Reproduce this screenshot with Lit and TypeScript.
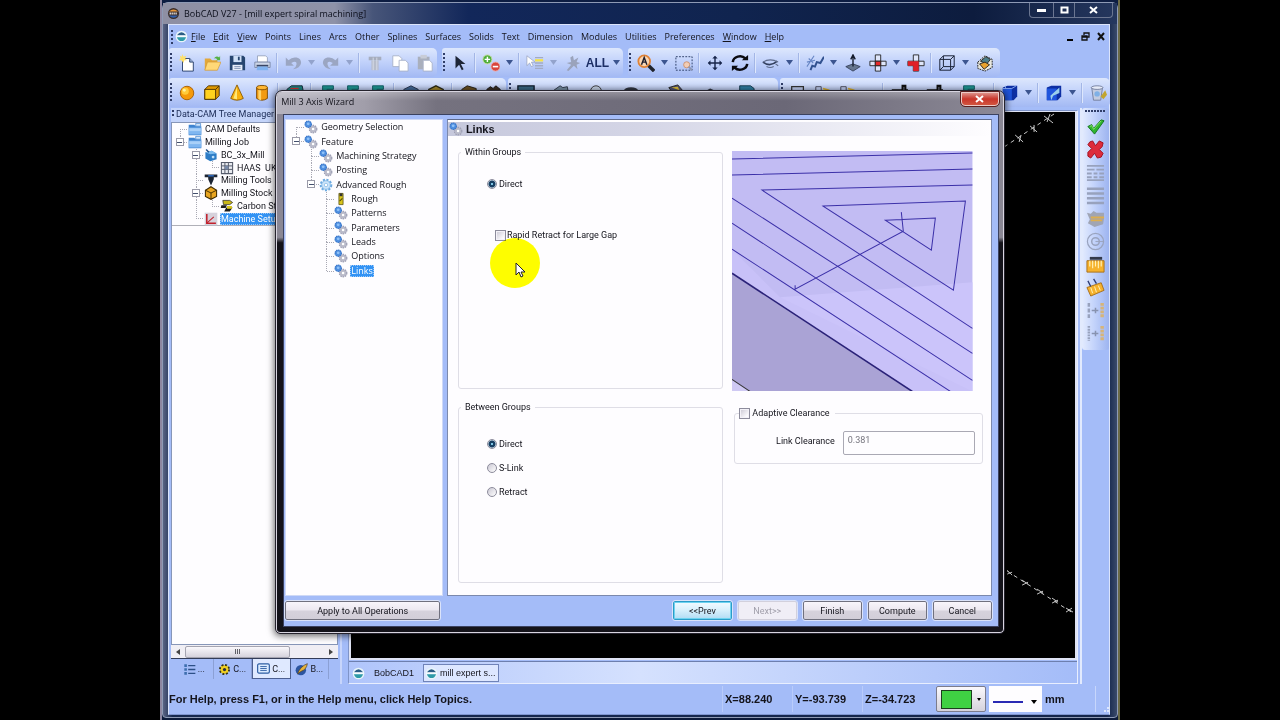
import { LitElement, html, svg, css, nothing } from "lit";
import { customElement } from "lit/decorators.js";
import { classMap } from "lit/directives/class-map.js";

/* Icon artwork, drawn on a 20 x 20 grid. */
const gear = (x: number, y: number, r: number, c: string, d: string) => svg`
  <circle cx=${x} cy=${y} r=${r} fill=${c} stroke=${d} stroke-width="2" stroke-dasharray="2 1.3"/>
  <circle cx=${x} cy=${y} r=${r - 0.6} fill=${c}/>
  <circle cx=${x} cy=${y} r=${r * 0.35} fill="#fff"/>`;

const art: Record<string, unknown> = {
  doc: svg`<path d="M5 5h8l4 4v10H5z" fill="#fff" stroke="#223a66"/><path d="M13 5v4h4" fill="#9db4da" stroke="#223a66"/><path d="M5 0l1 3 3-1-1 3 2 2-3 0-1 3-2-3-3 0 2-2-1-3 2 1z" fill="#ffe067"/>`,
  open: svg`<path d="M2 5h6l2 2h6v11H2z" fill="#e3a83a"/><path d="M5 9h15l-4 9H2z" fill="#ffd877" stroke="#c98e2b" stroke-width=".6"/><path d="M12 5q3-4 6-1l1-2v5h-5l2-1q-2-2-4-1z" fill="#54b043"/>`,
  save: svg`<path d="M2 2h15l2 2v14H2z" fill="#26456f"/><path d="M6 2h9v7H6z" fill="#cfe0f7"/><path d="M11 3h2v4h-2z" fill="#26456f"/><path d="M5 12h11v6H5z" fill="#e6edf9"/><path d="M7 14h7M7 16h7" stroke="#7a8db0"/>`,
  print: svg`<path d="M5 2h9l2 2v5H5z" fill="#fff" stroke="#8592ad" stroke-width=".8"/><path d="M2 9h17v6H2z" fill="#cdd6e8" stroke="#6a7896" stroke-width=".8"/><path d="M4 12h13v2H4z" fill="#3a4664"/><path d="M5 14h11l1 4H4z" fill="#7fb2f0"/>`,
  undo: svg`<path d="M2 4v9h9l-3-3q6-3 6 1 0 3-4 6 8-1 9-7 0-5-5-6-5-1-9 3z" fill="#9ba6c2"/>`,
  redo: svg`<path d="M18 4v9H9l3-3q-6-3-6 1 0 3 4 6-8-1-9-7 0-5 5-6 5-1 9 3z" fill="#9ba6c2"/>`,
  cut: svg`<path d="M3 3h14v4H3z" fill="#a6adbe"/><path d="M6 7h8v11H6z" fill="#b7bdcb"/><path d="M8 4v14M12 4v14" stroke="#d9deea"/>`,
  copy: svg`<path d="M2 2h7l3 3v9H2z" fill="#fff" stroke="#a9b2c8"/><path d="M9 7h7l3 3v9H9z" fill="#fff" stroke="#a9b2c8"/>`,
  paste: svg`<path d="M2 3h13v14H2z" fill="#a9afbc"/><path d="M5 1h7v4H5z" fill="#c8ccd6"/><path d="M8 7h7l3 3v9H8z" fill="#fff" stroke="#a9b2c8"/>`,
  pointer: svg`<path d="M5 2v14l4-4 3 6 2-1-3-6h5z" fill="#1d2536"/>`,
  plusminus: svg`<circle cx="6" cy="6" r="5" fill="#4fae3b" stroke="#c9dca0"/><path d="M6 3v6M3 6h6" stroke="#fff" stroke-width="1.6"/><circle cx="15" cy="14" r="5" fill="#d8443e" stroke="#f0a8a0"/><path d="M12 14h6" stroke="#fff" stroke-width="1.8"/>`,
  pick: svg`<path d="M1 2v11l3-3 2 4 2-1-2-4h4z" fill="#fff" stroke="#8d97b3" stroke-width=".7"/><path d="M10 4h9M10 10h9M10 13h9M10 16h9" stroke="#a2abc4" stroke-width="1.5"/><path d="M10 7h9" stroke="#f3e24a" stroke-width="2.600"/>`,
  wand: svg`<path d="M10 2l1 5 5-3-2 5 4 1-4 2 1 5-4-4-6 6-2-1 5-6-5-2 5-1-1-5z" fill="#9aa3bb"/>`,
  all: nothing,
  zoom: svg`<circle cx="8" cy="8" r="6.500" fill="#f8d6b4" stroke="#e08236" stroke-width="2"/><path d="M5 12l3-8 3 8M6 9h4" fill="none" stroke="#1d1d2c" stroke-width="1.6"/><path d="M13 13l6 6" stroke="#20242e" stroke-width="3.8"/>`,
  zoomwin: svg`<path d="M1 3h18v15H1z" fill="none" stroke="#22355f" stroke-dasharray="2 1.5"/><circle cx="13" cy="12" r="3.4" fill="#f2cdb5" stroke="#c98e6c"/><path d="M15 14l4 4" stroke="#8b95b0" stroke-width="2"/>`,
  move: svg`<path d="M10 3v14M3 10h14" fill="none" stroke="#17254a" stroke-width="1.6"/><path d="M10 2l3 3H7zM10 18l3-3H7zM2 10l3-3v6zM18 10l-3-3v6z" fill="#17254a"/>`,
  rotate: svg`<path d="M2 9a8 7 0 0 1 14-4M18 11a8 7 0 0 1-14 4" fill="none" stroke="#0b0b10" stroke-width="2.800"/><path d="M12 7h7V1zM8 13H1v6z" fill="#0b0b10"/>`,
  eye: svg`<path d="M1 9q8 6 16-1" fill="none" stroke="#33405f" stroke-width="1.800"/><path d="M1 9q8-5 17 0M5 14q4 2 8 0M15 11l3 2" fill="none" stroke="#5f6c8c" stroke-width="1.200"/>`,
  curve: svg`<path d="M5 18l2-5 3 1 2-5 4 1 4-7" fill="none" stroke="#31518f" stroke-width="2.200"/><path d="M1 9l9-2M1 14L9 2M3 5l5 5" stroke="#6685c4" stroke-width="1.200"/>`,
  plane: svg`<path d="M2 14l8-3 8 3-8 5z" fill="#66768f" stroke="#34405a"/><path d="M10 14V2M7.500 6L10 1l2.500 5" stroke="#141b2c" stroke-width="1.500" fill="none"/>`,
  cross: svg`<path d="M7 1h6v18H7zM1 8h18v5H1z" fill="#dfe6fa" stroke="#222" stroke-width="1"/><path d="M7 8h6v5H7z" fill="#e52a2a" stroke="#222"/>`,
  cross2: svg`<path d="M7 1h6v18H7zM1 8h18v5H1z" fill="#dfe6fa" stroke="#222" stroke-width="1"/><path d="M1 8h12v11H7v-6H1z" fill="#e01f28"/>`,
  wire: svg`<path d="M2 6h12v12H2zM6 2h12v12H6zM2 6l4-4M14 6l4-4M2 18l4-4M14 18l4-4" fill="none" stroke="#1b2338" stroke-width="1.1"/>`,
  iso: svg`<path d="M2 9l8-7 8 4v9l-8 4-8-3z" fill="#e8e8e0" stroke="#141414" stroke-dasharray="2 1"/><path d="M5 8l6-5 5 3-4 5z" fill="#4d7f8a" stroke="#222"/><path d="M4 11l6-2 5 3-6 5z" fill="#e8a22e" stroke="#222"/>`,
  sphere: svg`<circle cx="10" cy="10" r="7.500" fill="#f59a0a" stroke="#a45b00"/><circle cx="8" cy="8" r="4" fill="#ffcb3a"/><circle cx="7" cy="7" r="1.600" fill="#fff0a0"/>`,
  cube: svg`<path d="M2 6l4-4h12v11l-4 4H2z" fill="#e09a00" stroke="#4a3000"/><path d="M2 6h12v11H2z" fill="#ffd21e" stroke="#4a3000"/><path d="M14 6l4-4" stroke="#4a3000"/>`,
  cone: svg`<path d="M10 1l7 15q-7 4-14 0z" fill="#f8b010" stroke="#8a5a00"/><path d="M10 3L6 16l4 1z" fill="#ffe778"/>`,
  cylinder: svg`<path d="M4 4v12q6 4 12 0V4z" fill="#f29b13" stroke="#7c4a00"/><path d="M6 5v12l3 1V6z" fill="#ffd468"/><ellipse cx="10" cy="4" rx="6" ry="2.400" fill="#ffb733" stroke="#7c4a00"/>`,
  tealcube: svg`<path d="M1 6l5-4 12 0 1 5v8H1z" fill="#1f8a86" stroke="#123"/><path d="M5 5h9" stroke="#d33" stroke-width="1.400"/>`,
  teal: svg`<path d="M4 2h12v4H9v10H4z" fill="#1f9a96" stroke="#0d5a62"/>`,
  hexblue: svg`<path d="M10 2l8 4v8l-8 4-8-4V6z" fill="#456c9c" stroke="#23304a"/>`,
  hexgold: svg`<path d="M10 2l8 4v8l-8 4-8-4V6z" fill="#a58a2c" stroke="#2a2a18" stroke-width="1.500"/>`,
  dark: svg`<path d="M2 6l6-4 10 3v9H2z" fill="#6d5424" stroke="#1d1a14"/>`,
  gears: svg`<path d="M2 6l4-3 3 2 3-3 5 4-2 7H3z" fill="#3b3026" stroke="#111"/>`,
  screen: svg`<path d="M1 2h18v14H1z" fill="#3b6a86" stroke="#101c2c" stroke-width="1.500"/>`,
  diamond: svg`<path d="M2 7l7-5 3 2 5-1 1 6-9 6z" fill="#7a92a8" stroke="#2a3444"/>`,
  ring: svg`<circle cx="10" cy="8" r="6" fill="#c9d6ea" stroke="#333"/>`,
  oval: svg`<ellipse cx="10" cy="8" rx="8" ry="4.500" fill="#333845"/>`,
  tilt: svg`<path d="M2 4l10-3 6 7-10 4z" fill="#557" stroke="#222"/><path d="M5 4l7-1 2 4z" fill="#e6c63a"/>`,
  wedge: svg`<path d="M2 9l7-4 9 4-6 4z" fill="#343a48"/>`,
  box: svg`<path d="M3 2h12l4 3v8H3z" fill="#2f7fa4" stroke="#12344a"/>`,
  frame: svg`<path d="M3 3h13v12H3z" fill="none" stroke="#333" stroke-width="1.400"/>`,
  frame2: svg`<path d="M2 3h6v12H2z" fill="none" stroke="#445"/><path d="M10 5l7 2" stroke="#e2b52d" stroke-width="2"/>`,
  bar: svg`<path d="M2 7h12V2h3v5h3" stroke="#111" stroke-width="2.400" fill="none"/>`,
  bluebox: svg`<path d="M2 4l5-2h11v12l-4 4H2z" fill="#0d2fa3"/><path d="M2 5h10v13H2z" fill="#1f55dd"/><path d="M5 2v3M2 5h10l5-3" stroke="#89aaf4" fill="none"/>`,
  bluebox2: svg`<path d="M2 4l5-2h11v12l-4 4H2z" fill="#0d2fa3"/><path d="M2 5h11v13H2z" fill="#1f55dd"/><path d="M6 13l10-9v6l-7 3-2 5z" fill="#9ad0ec"/>`,
  bin: svg`<path d="M3 4h12l-2 14H5z" fill="#c3cbe0" stroke="#717c9c"/><ellipse cx="9" cy="4" rx="6.500" ry="2" fill="#e6ebf8" stroke="#717c9c"/><circle cx="9" cy="11" r="3" fill="#7fb0e6"/><path d="M13 14l5-7 2 5-4 5z" fill="#c2a52d"/>`,
  check: svg`<path d="M2 10l4-2 2 4 8-9 3 1-10 14z" fill="#2fb52f" stroke="#12751c"/><path d="M4 10l2-1 2 4 8-9" fill="none" stroke="#8be06c"/>`,
  redx: svg`<path d="M4 2l3-1 3 5 4-5 4 2-1 4-3 3 4 4-2 4-4 1-3-5-4 5-3-2 0-4 4-4-4-4z" fill="#dd2c3c" stroke="#a0101f"/>`,
  rows1: svg`<path d="M1 3h18M1 7h8M11 7h8M1 11h5M8 11h4M14 11h5M1 15h5M8 15h4M14 15h5M1 18h18" stroke="#98a2bd" stroke-width="2"/>`,
  rows2: svg`<path d="M1 3h18M1 8h18M1 13h18M1 18h18" stroke="#98a2bd" stroke-width="2.600"/>`,
  stack: svg`<path d="M1 4l4 1 3-3 3 2h8v6l-1 6-9 3-7-4 2-4z" fill="#a0a5b4"/><path d="M5 9h14M5 12h12" stroke="#dcae50" stroke-width="2"/>`,
  target: svg`<circle cx="10" cy="10" r="8.500" fill="none" stroke="#9aa4bf" stroke-width="1.300"/><circle cx="10" cy="10" r="4" fill="none" stroke="#9aa4bf" stroke-width="1.600"/><path d="M10 10h8" stroke="#9aa4bf"/>`,
  ruler: svg`<path d="M4 2h13v3H4z" fill="#333a4c"/><path d="M1 6h18v12H1z" fill="#f6b22c" stroke="#a8701a"/><path d="M4 6v6M7 6v8M10 6v6M13 6v8M16 6v6" stroke="#fff1b8" stroke-width="1.200"/>`,
  ruler2: svg`<path d="M1 10l15-5 3 8-14 6z" fill="#f6b22c" stroke="#a8701a"/><path d="M5 10l2 6M9 9l2 6M13 8l2 5" stroke="#fff1b8"/><path d="M2 3l3 6M8 1l3 5" stroke="#2c3c74" stroke-width="1.400"/>`,
  align1: svg`<path d="M3 2v4M3 8v4M3 14v4" stroke="#98a2bd" stroke-width="2.600"/><path d="M6 10h7M10 7v6" stroke="#8893b0" stroke-width="1.600"/><path d="M17 2v16" stroke="#d6b479" stroke-width="3.600" stroke-dasharray="3 1"/>`,
  align2: svg`<path d="M3 2v16" stroke="#98a2bd" stroke-width="2.600" stroke-dasharray="2 1"/><path d="M6 10h7M10 7v6" stroke="#8893b0" stroke-width="1.600"/><path d="M17 2v16" stroke="#d6b479" stroke-width="3.600" stroke-dasharray="3 1"/>`,
  folder: svg`<path d="M1 4h8l2 2h8v13H1z" fill="#3d83d0"/><path d="M1 8h18v10H1z" fill="#7fb6f0"/><path d="M2 9h16v4H2z" fill="#a9d0f8"/><path d="M11 2h7v4h-7z" fill="#cfe4fa" stroke="#3d83d0"/>`,
  mill: svg`<path d="M2 6l9-2 7 4v8l-9 3-7-4z" fill="#2d7cc6"/><path d="M2 6l7 3 9-1-7-4z" fill="#7cbbee"/><path d="M3 2l4 4" stroke="#1c4d85" stroke-width="2"/><circle cx="13" cy="13" r="2" fill="#bfe0fa"/>`,
  grid: svg`<path d="M2 2h16v16H2z" fill="#e8eaf0" stroke="#555b6b" stroke-width="1.500"/><path d="M7 2v16M2 7h16M2 12h16M12 2v16" stroke="#555b6b" stroke-width="1.400"/><path d="M7 7h5v5H7z" fill="#7688a8"/>`,
  tool: svg`<path d="M1 2h18v4h-5v3l-4 9-4-9V6H1z" fill="#1d2533"/><path d="M6 4h8" stroke="#2f6fc9" stroke-width="2"/>`,
  stock: svg`<path d="M10 1l8 5v9l-8 4-8-4V6z" fill="#e8a520" stroke="#3d2900" stroke-width="1.500"/><path d="M2 6l8 4 8-4M10 10v9" fill="none" stroke="#3d2900" stroke-width="1.300"/>`,
  carbon: svg`<path d="M4 2h10l4 3-4 3H5z" fill="#c9b818" stroke="#222"/><path d="M2 9h8l-2 4H1zM9 12h9l-4 6H6z" fill="#1c1c1c"/><path d="M10 10h7v4h-7z" fill="#d8c51e"/>`,
  setup: svg`<path d="M1 1h18v18H1z" fill="#d6d2dc"/><path d="M4 3v13h13" stroke="#c2202c" stroke-width="2.200" fill="none"/><path d="M4 16l10-9" stroke="#c2202c" stroke-width="1.500"/>`,
  cog2: svg`${gear(13, 13, 5.2, "#b9bac9", "#9c9db3")}<circle cx="6" cy="6" r="4.600" fill="#4f8fe0" stroke="#3472c6" stroke-width="1.500" stroke-dasharray="2 1"/><circle cx="6" cy="5.500" r="2" fill="#8fc1f7"/>`,
  cogblue: svg`<circle cx="10" cy="10" r="7.500" fill="#d3e9fb" stroke="#6fabe0" stroke-width="3" stroke-dasharray="3 2"/><circle cx="10" cy="10" r="6" fill="#cfe6fa" stroke="#7db4e4"/><circle cx="10" cy="10" r="2.500" fill="#fff" stroke="#7db4e4"/>`,
  rough: svg`<path d="M7 2h6v16H7z" fill="#d8c41c" stroke="#4f4808"/><path d="M8 2h4v4H8z" fill="#333"/><path d="M8 13l4-4" stroke="#4f4808" stroke-width="1.500"/>`,
  globe: svg`<circle cx="10" cy="10" r="9" fill="#e8f4fa"/><path d="M3 8q7-9 14 0z" fill="#2a5d86"/><path d="M3 11h14q-2 6-7 6t-7-6z" fill="#2e9aa8"/><path d="M2 9.500h16" stroke="#fff" stroke-width="1.500"/>`,
  app: svg`<circle cx="10" cy="10" r="8.500" fill="#3a2d2a"/><path d="M3 7q7-6 14 0z" fill="#e8973a"/><path d="M3 13h14q-7 7-14 0z" fill="#2f5fae"/><path d="M4 10h12" stroke="#e9e2dc" stroke-width="3" stroke-dasharray="2 1"/>`,
  list: svg`<path d="M2 2h4v4H2zM2 8h4v4H2zM2 14h4v4H2z" fill="#3f6fae"/><path d="M8 4h11M8 10h11M8 16h11" stroke="#2c4f86" stroke-width="2.200"/>`,
  cogtab: svg`<circle cx="10" cy="10" r="7" fill="#f0cf1f" stroke="#37351a" stroke-width="3" stroke-dasharray="3 2.500"/><circle cx="10" cy="10" r="5.500" fill="#f0cf1f"/><circle cx="10" cy="10" r="2.500" fill="#2b2f3c"/>`,
  cam: svg`<rect x="1" y="3" width="18" height="14" rx="2" fill="#dcecff" stroke="#2e5ea3" stroke-width="1.800"/><path d="M5 7h10M5 10h10M5 13h10" stroke="#2e5ea3" stroke-width="1.400"/>`,
  feather: svg`<circle cx="9" cy="11" r="8" fill="#2c55a0"/><path d="M4 17Q8 5 19 1q-1 9-10 12z" fill="#e7b33a" stroke="#4a3a20"/>`,
};

const icon = (name: string, size = 18) => html`<svg class="icon" width=${size} height=${size} viewBox="0 0 20 20" aria-hidden="true">${art[name]}</svg>`;

const strokes: Record<string, string[]> = {
  G: ["down", "right"], T: ["up", "down", "right"], L: ["up", "right"], I: ["up", "down"],
  B: ["up", "down", "right", "box"], b: ["up", "right", "box"], " ": [],
};

const guide = (kind: string) => {
  const s = strokes[kind];
  const d = "1 1";
  return html`<svg class="guide" aria-hidden="true">
    ${s.includes("up") ? svg`<line x1="50%" y1="0" x2="50%" y2="50%" stroke="#a9a9b4" stroke-dasharray=${d}/>` : nothing}
    ${s.includes("down") ? svg`<line x1="50%" y1="50%" x2="50%" y2="100%" stroke="#a9a9b4" stroke-dasharray=${d}/>` : nothing}
    ${s.includes("right") ? svg`<line x1="50%" y1="50%" x2="100%" y2="50%" stroke="#a9a9b4" stroke-dasharray=${d}/>` : nothing}
    ${s.includes("box") ? svg`<svg x="50%" y="50%" overflow="visible"><rect x="-4" y="-4" width="7" height="7" fill="#fff" stroke="#9a9aa8"/><path d="M-3 0h5" stroke="#44506e"/></svg>` : nothing}
  </svg>`;
};

type Row = { g: string; icon: string; text: string; on?: boolean };

const tree = (rows: Row[], label: string, cls: string) => html`
  <div class="tree ${cls}" role="tree" aria-label=${label}>
    ${rows.map((r) => html`<div class="node" role="treeitem" aria-selected=${r.on ? "true" : "false"}>
      ${[...r.g].map(guide)}<span class="nodeicon">${icon(r.icon, 14)}</span>
      <span class=${classMap({ nodetext: true, on: !!r.on })}>${r.text}</span></div>`)}
  </div>`;

const camRows: Row[] = [
  { g: "G", icon: "folder", text: "CAM Defaults" },
  { g: "b", icon: "folder", text: "Milling Job" },
  { g: " B", icon: "mill", text: "BC_3x_Mill" },
  { g: " IL", icon: "grid", text: "HAAS  UK" },
  { g: " T", icon: "tool", text: "Milling Tools" },
  { g: " B", icon: "stock", text: "Milling Stock" },
  { g: " IL", icon: "carbon", text: "Carbon Steel" },
  { g: " L", icon: "setup", text: "Machine Setup", on: true },
];

const wizardRows: Row[] = [
  { g: "G", icon: "cog2", text: "Geometry Selection" },
  { g: "b", icon: "cog2", text: "Feature" },
  { g: " T", icon: "cog2", text: "Machining Strategy" },
  { g: " T", icon: "cog2", text: "Posting" },
  { g: " b", icon: "cogblue", text: "Advanced Rough" },
  { g: "  T", icon: "rough", text: "Rough" },
  { g: "  T", icon: "cog2", text: "Patterns" },
  { g: "  T", icon: "cog2", text: "Parameters" },
  { g: "  T", icon: "cog2", text: "Leads" },
  { g: "  T", icon: "cog2", text: "Options" },
  { g: "  L", icon: "cog2", text: "Links", on: true },
];

/* "|" is a separator, "s" a space, "v" a drop-down arrow (enabled), "w" a disabled one. */
const bars1 = [
  "doc open save print | undo w redo w | cut copy paste",
  "pointer | plusminus v | pick w wand all v",
  "zoom v zoomwin | move rotate | eye v | curve v plane cross v cross2 | wire v iso",
];
const bars2 = [
  "sphere cube cone cylinder | tealcube | teal teal teal | hexblue hexgold | dark gears",
  "screen s diamond s ring s oval s s tilt s wedge s box s s",
  "frame frame2 frame2 s s | bar s bar s teal s | bluebox v | bluebox2 v | bin",
];

const toolbar = (spec: string) => html`<div class="bar" role="toolbar">
  <i class="grip"></i>
  ${spec.split(" ").map((n) =>
    n === "|" ? html`<i class="sep"></i>`
    : n === "s" ? html`<i class="space"></i>`
    : n === "v" || n === "w" ? html`<button class=${classMap({ drop: true, dim: n === "w" })} aria-label="More"><svg width="7" height="5" viewBox="0 0 7 5"><path d="M0 0h7L3.500 5z" fill="currentColor"/></svg></button>`
    : n === "all" ? html`<button class="tool all">ALL</button>`
    : html`<button class="tool" aria-label=${n}>${icon(n, 18)}</button>`)}
</div>`;

const menus: [string, boolean][] = [
  ["File", true], ["Edit", true], ["View", true], ["Points", false], ["Lines", false], ["Arcs", false],
  ["Other", false], ["Splines", false], ["Surfaces", false], ["Solids", false], ["Text", false],
  ["Dimension", false], ["Modules", false], ["Utilities", false], ["Preferences", false], ["Window", true], ["Help", true],
];

@customElement("app-root")
export class AppRoot extends LitElement {
  static styles = css`
    :host { display: block; height: 100vh; background: #000; overflow: hidden; color: #14141c;
      font: 9px/12px Roboto, "Liberation Sans", sans-serif; }
    * { box-sizing: border-box; }
    button { font: inherit; color: inherit; background: none; border: 0; padding: 0; margin: 0; }
    svg { display: block; flex: none; }
    .desktop { position: relative; height: 100%; margin: 0 12.5%; padding: 2px; overflow: hidden;
      background: linear-gradient(90deg, #8d86a0 0 2px, transparent 2px calc(100% - 2px), #6b6a48 calc(100% - 2px)),
        linear-gradient(#0d1d42, #0c1a3a); }
    .window { height: 100%; border: 1px solid #8e9ab5; border-radius: 6px 6px 4px 4px; padding: 0 7px 2px 5px;
      display: flex; flex-direction: column;
      background: linear-gradient(90deg, #5a6484, #16284f 1%, #14254b 99%, #3a4a6a); }
    .title { height: 21px; display: flex; align-items: center; gap: 4px; flex: none; margin: 0 -7px 0 -5px; padding: 0 4px 0 4px;
      background: linear-gradient(90deg, #8e8fa3, #8e92a8 18%, #475579 22%, #12275a 32%, #10244f 60%, #0d1c3e 85%, #25375e); }
    .title .name { font: 9px/14px "Open Sans", "Noto Sans", sans-serif; flex: 1; color: #0c0f1c; }
    .caps { display: flex; align-self: flex-start; height: 15px; border: 1px solid #6b7691; border-top: 0; border-radius: 0 0 4px 4px; }
    .caps button { width: 24px; display: grid; place-items: center; border-right: 1px solid #6b7691; }
    .caps button:nth-child(2) { width: 21px; }
    .caps button:last-child { width: 37px; border: 0; }
    .face { flex: 1; min-height: 0; display: flex; flex-direction: column; background: #a4bcf8; border: 1px solid #dbe4fb; border-bottom-color: #7f95cf; }
    .menu { height: 23px; display: flex; align-items: center; flex: none; padding: 0 3px 0 0; font: 9px/14px "Open Sans", "Noto Sans", sans-serif; }
    .grip { width: 2px; height: 20px; margin: 0 2px 0 1px; flex: none;
      background: repeating-linear-gradient(#2f3d68 0 2px, transparent 2px 4px); }
    .menu .grip { height: 14px; margin: 0 2px 0 2px; }
    .menu .items { display: flex; flex: 1; padding-left: 3px; gap: 8px; }
    .menu u { text-underline-offset: 1px; }
    .mdi { display: flex; gap: 6px; }
    .bars { display: flex; gap: 5px; height: 30px; padding-bottom: 1px; flex: none; }
    .low { gap: 2px; }
    .bar { display: flex; align-items: center; border-radius: 3px 5px 5px 3px;
      background: linear-gradient(#dde7fd, #c3d3fb 45%, #a3b9f3); }
    .bars .bar:last-child { padding-right: 3px; }
    .low .bar:last-child { flex: 1; padding: 0; }
    .tool { width: 25px; height: 26px; display: grid; place-items: center; }
    .all { font: bold 12px/14px "Liberation Sans", sans-serif; color: #1d2f66; }
    .drop { width: 13px; height: 26px; display: grid; place-items: center; color: #3c5590; }
    .dim { color: #93a3cc; }
    .sep { width: 2px; height: 20px; margin: 0 2px; background: linear-gradient(90deg, #a3b6e6 50%, #dde7fd 50%); }
    .low .bar:not(:last-child) .sep { margin: 0 3px; }
    .space { width: 10px; }
    .mid { flex: 1; min-height: 0; display: flex; }
    .side { width: 173px; flex: none; display: flex; flex-direction: column; padding: 0 2px 2px 2px; border-right: 2px solid #c7d5fb; }
    .head { display: flex; align-items: center; height: 14px; padding-bottom: 2px; color: #1a2a55; white-space: nowrap; background: #c4d4fa; }
    .head .grip { height: 8px; margin: 0 2px 0 1px; }
    .camtree { flex: 1; background: #fefdff; border: 1px solid #8796b8; overflow: hidden; }
    .tree { display: grid; grid-auto-rows: 1fr; }
    .cam { height: 103px; border-bottom: 1px solid #b0b0b8; }
    .node { display: flex; align-items: center; white-space: pre; min-height: 0; }
    .guide { width: 16px; height: 100%; shape-rendering: crispEdges; }
    .nodeicon { width: 15px; margin-right: 1px; }
    .nodetext { padding: 0 1px; }
    .on { background: #3393f4; color: #fff; outline: 1px dotted #9cc8f8; outline-offset: -1px; }
    .hscroll { display: flex; height: 14px; align-items: center; background: #f0eef4; padding: 0 5px; gap: 5px; border-bottom: 1px solid #333c58; }
    .hscroll b { width: 105px; height: 12px; border: 1px solid #a5a4b0; border-radius: 2px; background: linear-gradient(#faf8fc, #d5d2dc); font: 7px/9px "Liberation Sans", sans-serif; text-align: center; }
    .hscroll span { flex: 1; }
    .sidetabs { display: grid; grid-template-columns: repeat(4, 1fr); height: 23px; padding: 0 9px 3px 4px; }
    .sidetabs button { display: flex; align-items: center; justify-content: center; gap: 2px; border-right: 1px solid #8ba0d5; }
    .sidetabs .cur { background: #dfe9ff; border: 1px solid #4c5f90; border-top: 0; }
    .main { flex: 1; min-width: 0; display: flex; flex-direction: column; margin: 2px 2px 0 6px; border: 1px solid #7f94c8; border-color: #7f94c8 #e8eefe #e8eefe #7f94c8; }
    .view { flex: 1; min-height: 0; background: #000; border: solid #dfe3f4; border-width: 1px 2px 2px; overflow: hidden; }
    .doctabs { display: flex; height: 22px; padding: 2px 0 1px; margin-top: 1px; background: linear-gradient(90deg, #b0c5fb, #d5e1fe 40%, #a4bcf8); border-top: 1px solid #6d7fae; }
    .doctabs button { display: flex; align-items: center; gap: 3px; padding: 0 9px 0 3px; font-family: "Liberation Sans", sans-serif; }
    .doctabs .first { gap: 9px; }
    .doctabs .cur { border: 1px solid #6f83b8; background: #dde7ff; padding: 0 2px 0 1px; gap: 2px; }
    .right { width: 29px; flex: none; display: flex; flex-direction: column; border-left: 2px solid #e2eafd; }
    .rbar { display: flex; flex-direction: column; align-items: center; gap: 3px; padding: 2px 1px 7px 0; border-radius: 3px;
      background: linear-gradient(90deg, #e3ebfe, #c3d3fb 45%, #9db4f0); }
    .rbar .dots { width: 20px; height: 2px; margin-bottom: 1px; background: repeating-linear-gradient(90deg, #2f3d68 0 2px, transparent 2px 3px); }
    .rbar button { height: 20px; }
    .status { height: 30px; flex: none; display: flex; align-items: center; font: bold 11px/14px "Liberation Sans", sans-serif; }
    .status .msg { flex: 1; }
    .status .cell { width: 70px; padding-left: 2px; border-left: 1px solid #b9ccfb; line-height: 26px; }
    .colour { width: 50px; height: 26px; margin-left: 4px; display: flex; align-items: center; gap: 5px; padding: 0 4px; border: 1px solid #7c7c8c; border-radius: 2px; background: linear-gradient(#faf8fc, #d5d2dc); }
    .colour i { width: 35px; height: 19px; background: #3fd143; border: 1px solid #1c3d1e; }
    .line { width: 53px; height: 26px; margin: 0 3px; background: #fefdff; display: flex; align-items: center; padding: 6px 4px 0; gap: 8px; }
    .line i { width: 30px; height: 2px; background: #2a2ab4; }
    .unit { width: 51px; border-right: 1px solid #c7d6fc; line-height: 26px; }
    .gripper { width: 13px; align-self: flex-end; padding: 0 0 2px 4px; }

    .dialog { position: absolute; left: 12%; right: 12%; top: 90px; bottom: 86px; border: 1px solid #25232d; border-radius: 7px 7px 5px 5px; padding: 0 5px 6px 7px;
      display: flex; flex-direction: column; box-shadow: 0 1px 7px 1px #0009, inset 0 0 0 1px #d8d5e0;
      background: linear-gradient(#8a8794, #8a8794 27%, #14131a 28%); }
    .dialog header { height: 22px; flex: none; margin: 1px -4px 0 -6px; display: flex; justify-content: space-between; padding: 0 4px 0 4px; border-radius: 5px 5px 0 0;
      background: linear-gradient(#ffffff40, transparent 40%), linear-gradient(90deg, #b5b3be, #a19eaa 12%, #75727f 22%, #6b6877 70%, #8c8996); }
    .dialog header span { font: 9px/19px "Open Sans", "Noto Sans", sans-serif; }
    .close { width: 38px; height: 14px; border: 1px solid #eccac6; border-radius: 0 0 4px 4px; outline: 1px solid #5a2020; outline-offset: 0; display: grid; place-items: center;
      background: linear-gradient(#dd9088, #c8352a 50%, #d2553f); }
    .sheet { flex: 1; min-height: 0; background: #a4bcf8; border: 1px solid #3b4260; display: flex; flex-direction: column; padding: 4px 6px 6px 1px; }
    .panes { flex: 1; min-height: 0; display: grid; grid-template-columns: 158fr 546fr; gap: 4px; }
    .nav { background: #fefdff; font: 9px/12px "Open Sans", "Noto Sans", sans-serif; border: 1px solid #cfd9f6; padding-left: 3px; }
    .wizard { height: 158px; }
    .wizard .guide { width: 15px; }
    .page { background: #fefdff; border: 1px solid #7c89ac; border-top-color: #5f6b8c; }
    .page h1 { margin: 2px 0 0; height: 14px; display: flex; align-items: center; gap: 3px; padding-left: 1px; font: bold 11px/14px "Liberation Sans", sans-serif;
      background: linear-gradient(90deg, #c6c8dc, #d4d5e6 35%, #fefdff); }
    .grid { display: grid; grid-template-columns: 265fr 250fr; column-gap: 9px; padding: 10px 8px 0 10px; }
    .cols { display: flex; flex-direction: column; gap: 12px; }
    fieldset { margin: 0; min-width: 0; border: 1px solid #dfdee6; border-radius: 3px; padding: 0; }
    legend { margin-left: 2px; padding: 0 4px; height: 12px; line-height: 12px; }
    .within { height: 243px; }
    .between { height: 182px; }
    label { display: flex; align-items: center; gap: 2px; height: 12px; }
    .opts { display: grid; padding: 20px 0 0 28px; }
    .within .opts { gap: 39px; }
    .within .opts .nested { padding-left: 8px; gap: 1px; }
    .between .opts { padding-top: 25px; gap: 12px; }
    input { margin: 0; font: inherit; }
    input[type="radio"] { appearance: none; width: 10px; height: 10px; border: 1px solid #8d8c9c; border-radius: 50%; background: linear-gradient(135deg, #cbc8d4, #fff); }
    input[type="radio"]:checked { background: radial-gradient(circle at 50% 50%, #7fc6e4 0 1px, #173f63 1px 3px, #dcebf4 4px); }
    input[type="checkbox"] { appearance: none; width: 11px; height: 11px; border: 1px solid #8d8c9c; background: linear-gradient(135deg, #c9c6d2, #fdfcff 80%); box-shadow: inset 0 0 0 1px #f4f2f8; }
    .pic { width: 96%; aspect-ratio: 1; height: auto; margin-top: 5px; }
    .clear { margin: 16px 0 0 2px; height: 57px; }
    .clear legend { padding: 0; margin-left: 4px; padding-right: 5px; }
    .field { display: flex; justify-content: flex-end; gap: 8px; padding: 12px 7px 0 0; }
    .field label { height: 19px; }
    .field input { width: 132px; height: 24px; border: 1px solid #aaa9b4; border-radius: 2px; background: #fefdff; color: #77767f; padding: 0 4px 6px; }
    .buttons { display: flex; gap: 6px; padding: 5px 0 0; flex: none; }
    .buttons span { flex: 1; }
    .btn { width: 59px; height: 19px; border: 1px solid #70707e; border-radius: 2px; outline: 1px solid #dbe3fa; outline-offset: 0; background: linear-gradient(#f8f5fb, #ece8f0 48%, #d6d2dc 52%, #d2ced8); }
    .wide { width: 155px; }
    .focus { border-color: #2a9cc8; background: linear-gradient(#f2fbff, #d8f0fc 48%, #b2dcf4); box-shadow: inset 0 0 0 1px #6ed3f0; }
    .btn:disabled { color: #a19fab; background: #f0eef6; border-color: #d2d0dc; }
    .spot { position: absolute; left: 214px; top: 147px; width: 50px; height: 50px; border-radius: 50%; background: #ffff00; mix-blend-mode: multiply; }
    .arrow { position: absolute; left: 239px; top: 171px; }
  `;

  render() {
    return html`<div class="desktop">
      <main class="window">
        <div class="title">${icon("app", 13)}<span class="name">BobCAD V27 - [mill expert spiral machining]</span>
          <div class="caps">
            <button aria-label="Minimize"><svg width="11" height="5"><path d="M1 1h9v3H1z" fill="#fff"/></svg></button>
            <button aria-label="Maximize"><svg width="9" height="8"><path d="M1.500 1.500h6v5h-6z" fill="none" stroke="#fff" stroke-width="2"/></svg></button>
            <button aria-label="Close"><svg width="9" height="8"><path d="M1 1l7 6M8 1L1 7" stroke="#fff" stroke-width="2"/></svg></button>
          </div></div>
        <div class="face">
          <nav class="menu"><i class="grip"></i>${icon("globe", 13)}
            <div class="items">${menus.map(([m, u]) => html`<button>${u ? html`<u>${m[0]}</u>${m.slice(1)}` : m}</button>`)}</div>
            <div class="mdi">
              <button aria-label="Minimize document"><svg width="9" height="9"><path d="M1 7h6v2H1z"/></svg></button>
              <button aria-label="Restore document"><svg width="9" height="9"><path d="M3 3V1h5v4H6M1 4h5v4H1zM1 5h5" fill="none" stroke="#111" stroke-width="1.300"/></svg></button>
              <button aria-label="Close document"><svg width="10" height="9"><path d="M2 1l6 7M8 1L2 8" stroke="#111" stroke-width="2"/></svg></button>
            </div></nav>
          <div class="bars">${bars1.map(toolbar)}</div>
          <div class="bars low">${bars2.map(toolbar)}</div>
          <div class="mid">
            <aside class="side">
              <div class="head"><i class="grip"></i>Data-CAM Tree Manager</div>
              <div class="camtree">${tree(camRows, "Data-CAM Tree Manager", "cam")}</div>
              <div class="hscroll"><svg width="4" height="6"><path d="M4 0v6L0 3z" fill="#444"/></svg><b>III</b><span></span><svg width="4" height="6"><path d="M0 0v6l4-3z" fill="#444"/></svg></div>
              <div class="sidetabs">
                <button>${icon("list", 13)}...</button><button>${icon("cogtab", 13)}C...</button>
                <button class="cur">${icon("cam", 13)}C...</button><button>${icon("feather", 13)}B...</button>
              </div>
            </aside>
            <section class="main">
              <div class="view"><svg width="100%" height="100%" viewBox="0 0 725 547" preserveAspectRatio="xMaxYMin meet">
                <g fill="none" stroke="#c9c9c9" stroke-width="1">
                  <path d="M654 35L704 2M657 460L723 502" stroke-dasharray="4 4"/>
                  <path d="M665 23l8 7M671 23l-2 7M680 14l7 6M684 13v7M694 4l9 7M700 2l-3 8M654 31v6M657 459l5 5M657 463l5-2M672 469l6 4M672 474l6-3M687 478l6 4M687 483l6-3M702 487l6 4M702 492l6-3M716 497l7 4M716 501l6-4"/>
                </g></svg></div>
              <div class="doctabs">
                <button class="first">${icon("globe", 13)}BobCAD1</button>
                <button class="cur">${icon("globe", 13)}mill expert s...</button>
              </div>
            </section>
            <div class="right"><div class="rbar"><i class="dots"></i>
              ${["check", "redx", "rows1", "rows2", "stack", "target", "ruler", "ruler2", "align1", "align2"].map((n) => html`<button aria-label=${n}>${icon(n, 19)}</button>`)}
            </div></div>
          </div>
          <footer class="status">
            <span class="msg">For Help, press F1, or in the Help menu, click Help Topics.</span>
            <span class="cell">X=88.240</span><span class="cell">Y=-93.739</span><span class="cell">Z=-34.723</span>
            <button class="colour" aria-label="Colour"><i></i><svg width="4" height="3"><path d="M0 0h4L2 3z"/></svg></button>
            <button class="line" aria-label="Line style"><i></i><svg width="6" height="4"><path d="M0 0h6L3 4z"/></svg></button>
            <span class="unit">mm</span>
            <svg class="gripper" width="13" height="12"><path d="M7 9h2M4 9h2M7 6h2M10 9h2M10 6h2M10 3h2" stroke="#dce6fd" stroke-width="2"/></svg>
          </footer>
        </div>
      </main>
      <section class="dialog" role="dialog" aria-label="Mill 3 Axis Wizard">
        <header><span>Mill 3 Axis Wizard</span><button class="close" aria-label="Close"><svg width="9" height="8"><path d="M1 1l7 6M8 1L1 7" stroke="#fff" stroke-width="2"/></svg></button></header>
        <div class="sheet">
          <div class="panes">
            <div class="nav">${tree(wizardRows, "Wizard pages", "wizard")}</div>
            <div class="page">
              <h1>${icon("cog2", 14)}Links</h1>
              <div class="grid">
                <div class="cols">
                  <fieldset class="within"><legend>Within Groups</legend><div class="opts">
                    <label><input type="radio" name="within" checked />Direct</label>
                    <label class="nested"><input type="checkbox" />Rapid Retract for Large Gap</label>
                  </div></fieldset>
                  <fieldset class="between"><legend>Between Groups</legend><div class="opts">
                    <label><input type="radio" name="between" checked />Direct</label>
                    <label><input type="radio" name="between" />S-Link</label>
                    <label><input type="radio" name="between" />Retract</label>
                  </div></fieldset>
                </div>
                <div>
                  <svg class="pic" viewBox="0 0 240 240" role="img" aria-label="Tool path preview">
                    <path d="M0 0h240v240H0z" fill="#c2bcf3"/><path d="M48 146L240 131v109H180z" fill="#cbc4fa"/>
                    <path d="M0 98L48 146l192 94H180L0 122z" fill="#c8c1f8"/>
                    <path d="M0 122L180 240H0z" fill="#aaa3d5"/><path d="M0 228l18 12H0z" fill="#cfc9f3"/>
                    <g fill="none" stroke="#3b30a8" stroke-width="1">
                      <path d="M0 8L240 2M0 24L240 18M240 34L30 39 240 177M0 47L240 202M0 72L240 229M0 98L218 240M91 55L233 50 221 139zM153 69L203 67 199 99zM63 134v4L171 80 169 61"/>
                    </g>
                    <path d="M0 122L180 240" stroke="#2a2278" stroke-width="1.600"/><path d="M0 228l18 12" stroke="#333"/>
                  </svg>
                  <fieldset class="clear"><legend><label><input type="checkbox" />Adaptive Clearance</label></legend>
                    <div class="field"><label for="clearance">Link Clearance</label><input id="clearance" type="text" value="0.381" disabled /></div>
                  </fieldset>
                </div>
              </div>
            </div>
          </div>
          <div class="buttons">
            <button class="btn wide">Apply to All Operations</button><span></span>
            <button class="btn focus">&lt;&lt;Prev</button><button class="btn" disabled>Next&gt;&gt;</button>
            <button class="btn">Finish</button><button class="btn">Compute</button><button class="btn">Cancel</button>
          </div>
        </div>
        <div class="spot"></div>
        <svg class="arrow" width="11" height="17" viewBox="0 0 11 17"><path d="M1 1v12l3-3 2 5 2-1-2-4h4z" fill="#fff" stroke="#222"/></svg>
      </section>
    </div>`;
  }
}
